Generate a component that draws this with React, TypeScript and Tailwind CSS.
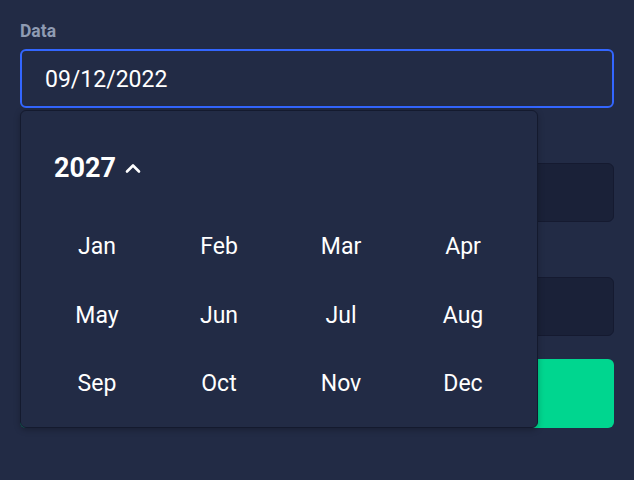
import React from "react";

const months = ["Jan", "Feb", "Mar", "Apr", "May", "Jun", "Jul", "Aug", "Sep", "Oct", "Nov", "Dec"];

export default function App() {
  return (
    <div className="min-h-[480px] w-[634px] bg-[#222b45] px-5 pt-[21px] font-['Roboto',sans-serif] text-white">
      <div className="relative">
        <label className="block h-5 text-[17.5px] font-bold leading-5 text-[#8f9bb3]">Data</label>
        <div className="mt-2 flex h-[59px] items-center rounded-md border-2 border-[#3366ff] bg-[#222b45] pl-[23px] pt-[3px] text-[23px] text-white">
          09/12/2022
        </div>
        <div className="absolute left-0 top-[calc(100%+2px)] z-10 h-[318px] w-[518px] rounded-md border border-[#141a2e] bg-[#222b45] shadow-[0_2px_6px_rgba(0,0,0,0.25)]">
          <div className="flex h-[102px] items-start pl-[33px] pt-[41px]">
            <div className="flex h-8 items-center">
              <span className="text-[27px] font-bold leading-8 text-white">2027</span>
              <svg className="ml-[9px]" width="16" height="16" viewBox="0 0 16 16" fill="none">
                <path d="M2 11.5 L8 5.5 L14 11.5" stroke="white" strokeWidth="2.6" strokeLinecap="round" strokeLinejoin="round" />
              </svg>
            </div>
          </div>
          <div className="ml-[15px] grid w-[488px] grid-cols-4">
            {months.map((m) => (
              <div key={m} className="flex h-[68.5px] items-center justify-center text-[23px] text-white">
                {m}
              </div>
            ))}
          </div>
        </div>
      </div>
      <div className="mt-[27px]">
        <div className="h-5" />
        <div className="mt-2 h-[59px] rounded-md border border-[#151a30] bg-[#1a2138]" />
      </div>
      <div className="mt-[27px]">
        <div className="h-5" />
        <div className="mt-2 h-[59px] rounded-md border border-[#151a30] bg-[#1a2138]" />
      </div>
      <button className="mt-[23px] h-[69px] w-full rounded-md bg-[#00d68f]" />
    </div>
  );
}
